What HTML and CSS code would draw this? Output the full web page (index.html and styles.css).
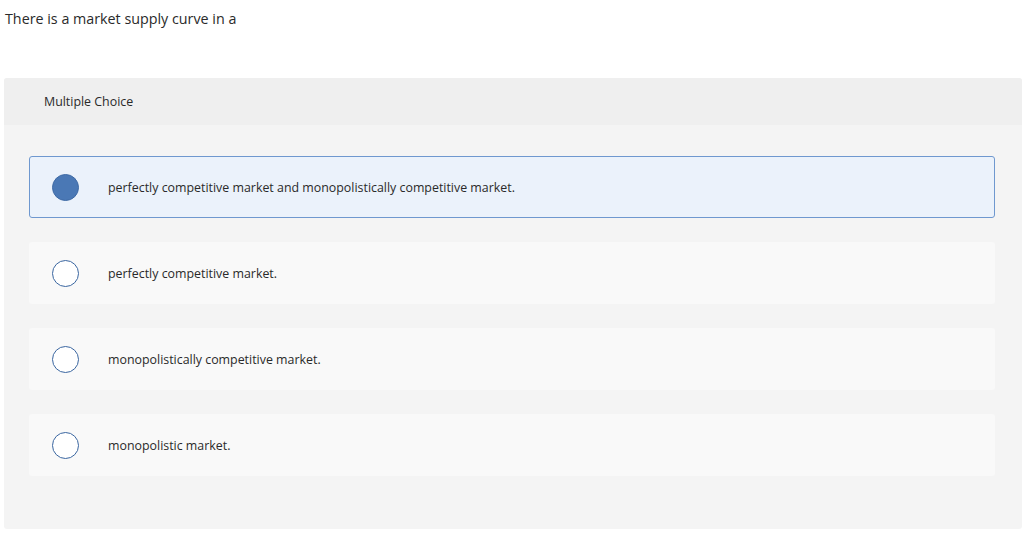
FILE: index.html
```html
<!DOCTYPE html>
<html lang="en">
<head>
    <meta charset="UTF-8">
    <title>Question</title>
    <link rel="stylesheet" href="styles.css">
</head>
<body>
    <p class="question">There is a market supply curve in a</p>

    <div class="panel">
        <div class="panel-header">Multiple Choice</div>
        <div class="choices">
            <div class="choice selected">
                <span class="radio"></span>
                <span class="choice-text">perfectly competitive market and monopolistically competitive market.</span>
            </div>
            <div class="choice">
                <span class="radio"></span>
                <span class="choice-text">perfectly competitive market.</span>
            </div>
            <div class="choice">
                <span class="radio"></span>
                <span class="choice-text">monopolistically competitive market.</span>
            </div>
            <div class="choice">
                <span class="radio"></span>
                <span class="choice-text">monopolistic market.</span>
            </div>
        </div>
    </div>
</body>
</html>
```

FILE: styles.css
```css
* { margin: 0; padding: 0; box-sizing: border-box; }
body { font-family: "Open Sans", Lato, Arial, sans-serif; background: #fff; color: #2a2a2a; }

.question { font-size: 14.3px; padding: 9px 5px 0; height: 78px; }

/* Panel */
.panel { margin: 0 2px 0 4px; background: #f4f4f4; border-radius: 3px; }
.panel-header { background: #efefef; height: 47px; padding-left: 40px; font-size: 12.4px; line-height: 47px; border-radius: 3px 3px 0 0; }
.choices { padding: 31px 27px 53px 25px; display: flex; flex-direction: column; gap: 24px; }

/* Choices */
.choice { background: #f9f9f9; height: 62px; display: flex; align-items: center; padding-left: 22px; border: 1px solid transparent; border-radius: 3px; }
.choice.selected { background: #ebf2fb; border-color: #6f98cf; }
.radio { width: 27px; height: 27px; border-radius: 50%; border: 1px solid #3a66a0; background: #fff; flex-shrink: 0; }
.choice.selected .radio { background: #4a78b5; border-color: #3e6aa5; }
.choice-text { margin-left: 29px; font-size: 12.4px; }
```
